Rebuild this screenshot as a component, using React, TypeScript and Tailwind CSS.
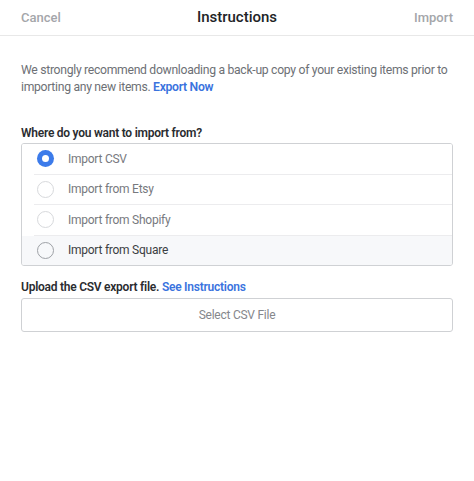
const options = [
  { label: "Import CSV", checked: true, strong: false },
  { label: "Import from Etsy", checked: false, strong: false },
  { label: "Import from Shopify", checked: false, strong: false },
  { label: "Import from Square", checked: false, strong: true },
];

export default function App() {
  return (
    <div className="h-[481px] w-[474px] bg-white font-['Roboto',sans-serif] text-[12px] tracking-[-0.25px]">
      <div className="flex h-[36px] items-center justify-between border-b border-[#e8e8e8] px-[21px] tracking-normal">
        <span className="w-[60px] text-[13px] font-medium text-[#a4a6aa]">Cancel</span>
        <span className="text-[15px] font-medium text-[#212326]">Instructions</span>
        <span className="w-[60px] text-right text-[13px] font-medium text-[#a4a6aa]">Import</span>
      </div>

      <div className="px-[21px]">
        <p className="mt-[26px] text-[12.2px] leading-[17px] tracking-[-0.3px] text-[#6d7075]">
          We strongly recommend downloading a back-up copy of your existing items prior to importing any new items.{" "}
          <span className="font-semibold text-[#3a73de]">Export Now</span>
        </p>

        <p className="mt-[29px] leading-[17px] font-semibold text-[#2a2c30]">Where do you want to import from?</p>

        <div className="mt-[1px] overflow-hidden rounded-[3px] border border-[#cfd1d4]">
          {options
            .map((o) => (
              <div
                key={o.label}
                className={`flex h-[29.5px] items-center pl-[15px] ${o.strong ? "bg-[#f7f8fa]" : "bg-white"}`}
              >
                {o.checked ? (
                  <span className="flex h-[17px] w-[17px] items-center justify-center rounded-full bg-[#3c7bea]">
                    <span className="h-[7px] w-[7px] rounded-full bg-white" />
                  </span>
                ) : (
                  <span
                    className={`h-[17px] w-[17px] rounded-full border ${o.strong ? "border-[#9ea1a6]" : "border-[#d7d9dc]"}`}
                  />
                )}
                <span className={`ml-[14px] ${o.strong ? "text-[#3b3e42]" : "text-[#77797e]"}`}>{o.label}</span>
              </div>
            ))
            .flatMap((row, i) =>
              i === 0 ? [row] : [<div key={`d${i}`} className="ml-[12px] h-px bg-[#ececee]" />, row]
            )}
        </div>

        <p className="mt-[13px] leading-[17px] font-semibold text-[#2a2c30]">
          Upload the CSV export file. <span className="text-[#3a73de]">See Instructions</span>
        </p>

        <button className="mt-[2px] flex h-[34px] w-full items-center justify-center rounded-[3px] border border-[#cfd1d4] bg-white text-[#85878c]">
          Select CSV File
        </button>
      </div>
    </div>
  );
}
